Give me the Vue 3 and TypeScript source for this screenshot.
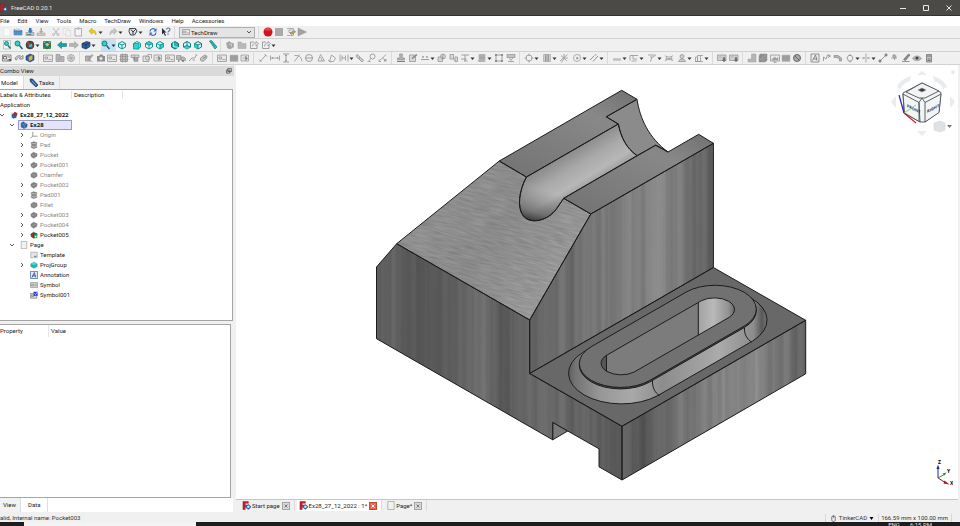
<script setup lang="ts">
import { computed, ref } from 'vue'

// [path data, fill, stroke, stroke width]; an empty entry means "none"
type Part = [string, string?, string?, number?]

interface Tool {
  icon: string
  label: string
  menu?: boolean
  active?: boolean
}

interface Group {
  width: number
  handle: boolean
  tools: Tool[]
  workbench?: boolean
}

const G = '#949494'
const T = '#0b9a9a'
const C = '#35cfcb'
const D = '#2b3440'

const box = 'M3 7l7-4 7 4v7l-7 4-7-4z'
const boxLines = 'M3 7l7 3 7-3M10 10v8'

const icons: Record<string, Part[]> = {
  blank: [['M4 2h9l3 3v13H4z', '#fafafa', '#dcdcdc']],
  open: [['M2 5h6l2 2h8v9H2z', '#3d78b4', '#2f5f92'], ['M3 3h12v4H3z', '#c9d3dc'], ['M2 9h16v7H2z', '#5290cc']],
  save: [['M2 11h16v6H2z', '#c4cad0', '#6d7a88'], ['M8 2h5v5h3l-5 6-6-6h3z', '#3a76b8'], ['M4 15h9', '', '#55606c', 1.5]],
  saveAs: [['M2 12h16v5H2z', '#cccccc', '#999999'], ['M9 2h3v6h3l-5 5-4-5h3z', '#a9a9a9']],
  cut: [['M4 2l9 12M16 2L7 14', '', '#a8a8a8', 1.6], ['M3 15a2 2 0 104 0 2 2 0 10-4 0M12 15a2 2 0 104 0 2 2 0 10-4 0', '', '#a8a8a8', 1.6]],
  copy: [['M3 3h9v11H3z', '#f3f3f3', '#d6d6d6'], ['M8 7h9v11H8z', '#f3f3f3', '#cccccc']],
  paste: [['M4 3h13v15H4z', '#f4f4f4', '#a0a0a0', 1.6], ['M8 1h5v4H8z', '#b4b4b4']],
  undo: [['M2 8l6-6v4c6 0 9 3 8 10-2-4-4-5-8-5v4z', '#f0c619', '#c9a51d']],
  redo: [['M18 8l-6-6v4c-6 0-9 3-8 10 2-4 4-5 8-5v4z', '#c4c4c4', '#adadad']],
  link: [['M3 3h12l3 5-5 8H5L2 9z', '#e3e6ea', D, 1.8], ['M6 5l4 5 6-6M10 10v5', '', D, 2]],
  refresh: [['M4 9a6 6 0 0111-3M16 11a6 6 0 01-11 3', '', '#3a6cac', 2.4], ['M17 2v7h-6zM3 18v-7h6z', '#3a6cac']],
  help: [['M2 2v13l3-3 3 6 2-1-3-6h4z', '#27323f'], ['M11 5c0-4 7-4 7 0 0 3-4 3-4 6M14 13v3', '', '#55749c', 2.2]],
  sheet: [['M1 4h18v12H1z', '#eeeeee', '#777777', 1.5], ['M4 8h6v4H4zM12 12h5', '', '#777777', 1.4]],
  record: [['M1 10a9 9 0 1018 0 9 9 0 10-18 0', '#d3131c'], ['M4 7a6 5 0 0112 0', '#e8484c']],
  stop: [['M2 2h16v16H2z', '#a9a9a9']],
  macro: [['M2 3h13v3H6v5h9v6H2', '#ececec', '#9a9a9a', 1.5], ['M8 12l9-5 2 3-8 5z', '#c8a74a', '#6c6250']],
  play: [['M2 2l17 8-17 8z', '#a3a3a3', '#949494']],

  fitAll: [['M3 1h14v17H3z', '#eef3f3', '#8f9a9a'], ['M5 7a4 4 0 108 0 4 4 0 10-8 0', C, '#14706f', 1.6], ['M12 11l5 6', '', '#176565', 2.5]],
  zoom: [['M2 7a5 5 0 1010 0A5 5 0 102 7', C, '#14706f', 1.8], ['M11 11l6 7', '', '#176565', 3]],
  style: [['M2 10a8 8 0 1016 0 8 8 0 10-16 0', '#4b4b4b', '#222222'], ['M5 5l10 10', '', '#d23b3b', 3], ['M7 12l6-5 2 4-5 4z', C]],
  bbox: [[box, '#13807c', '#0a4f4d'], ['M3 3h14v14H3z', '', '#3a6d38', 1.6], ['M6 8l5-2 4 3-5 4z', '#e2c65d']],
  left: [['M1 10l8-7v4h10v6H9v4z', '#12a7a7', '#0c6e70']],
  right: [['M19 10l-8-7v4H1v6h10v4z', '#b4b4b4', '#999999']],
  cubeBlue: [['M2 7l9-4 7 2v8l-8 5-8-3z', '#2c5f98', '#183a66', 1.4], ['M2 7l8 2 8-4M10 9v9', '', '#173358', 1.4]],
  cubeIso: [[box, '#e6f6f6', T, 2], [boxLines, '', T, 2]],
  cubeFront: [[box, '#e0f5f5', T, 2], ['M3 7h11v11H3z', C, T, 1.6]],
  cubeTop: [[box, '#e9f7f7', T, 2], ['M3 7l7-4 7 4-7 3z', C, T], [boxLines, '', T, 1.8]],
  cubeRight: [[box, '#e9f7f7', T, 2], ['M10 10l7-3v7l-7 4z', C, T], [boxLines, '', T, 1.8]],
  cubeRear: [[box, '#27b3b0', '#0a7373', 2], ['M7 5v8l10 2', '', '#d9fbfa', 1.6]],
  cubeBottom: [[box, '#d9f2f2', '#0a7f7f', 2], ['M3 14l7-3 7 3-7 4z', C], ['M10 3v8M3 14l7-3 7 3', '', '#0a7f7f', 1.8]],
  cubeLeft: [[box, '#d9f2f2', '#0a7f7f', 2], ['M3 7l7 3v8l-7-4z', C], [boxLines, '', '#0a7f7f', 1.8]],
  measure: [['M3 2l4-1 11 13-4 4z', '#2fc0bd', '#0d7a78', 1.4], ['M7 6l2-2M10 10l2-2M13 13l2-2', '', '#0b5b5a']],
  part: [['M3 6l6-3 3 3 5 1v7l-7 4-5-2z', '#a5a5a5', '#969696'], ['M8 8l5 1v4', '', '#dddddd', 1.5]],
  folder: [['M2 4h6l2 3h8v10H2z', '#b9b9b9', '#a2a2a2']],
  export: [['M16 10v7H3V4h7', '', G, 1.8], ['M7 13c0-5 3-7 7-7V3l5 4-5 5V9', '#e6e6e6', G, 1.5]],

  page: [['M1 4h17v12H1z', '#f1f1f1', '#6b6b6b', 1.6], ['M3 7h6v5H3zM11 8h5M10 14h7', '', '#555555', 1.6], ['M13 12h6l-3 5z', '#4a4a4a']],
  redraw: [['M2 12c2-7 10-8 13-5l3-2v7h-7l2-3c-3-2-7 0-8 5z', '#e2e2e2', '#666666', 1.4]],
  view: [['M2 6l8-4 8 3v9l-8 4-8-4z', '#2c5d93', '#1c3558'], ['M7 8l8-4v9l-7 3z', '#d6b248']],
  frame: [['M1 4h18v13H1z', '#e6e6e6', G, 1.6], ['M4 8h5v4H4zM11 13h6', '', G, 1.5]],
  stack: [['M2 3h8v4h8v10H2z', '#b7b7b7', G, 1.4], ['M5 10h9M5 13h9', '', '#8f8f8f']],
  globe: [['M3 10a7 7 0 1014 0 7 7 0 10-14 0M10 3v14M3 10h14M6 5c3 3 3 8 0 11M14 5c-3 3-3 8 0 11', '', G, 1.4]],
  pen: [['M3 6h9v10H3zM7 12L16 3l2 2-9 9z', '#b9b9b9', '#8b8b8b', 1.5], ['M5 8h4M11 15l6 2', '', G, 1.5]],
  camera: [['M2 6h4l2-3h5l2 3h3v11H2z', '#8e8e8e'], ['M6 11a4 4 0 108 0 4 4 0 10-8 0', '#e2e2e2', '#777777']],
  grid: [['M3 3h14v14H3z', '#bdbdbd', G, 1.6], ['M1 7h18M1 13h18M7 1v18M13 1v18', '', G, 1.4]],
  proj: [['M2 4h16v5H2z', '#d6d6d6', G, 1.5], ['M6 9h10v8H8z', '#a4a4a4', G], ['M9 5v9', '', '#777777']],
  detail: [['M2 6h12v11H2z', '#e2e2e2', G, 1.6], ['M7 10a4 4 0 108 0 4 4 0 10-8 0M11 3h8v8', '', G, 1.6]],
  section: [['M2 4h15v12H2z', '#e2e2e2', G, 1.4], ['M6 10h8M11 6v9l4-4z', '#848484', '#848484']],
  truck: [['M1 5h9v8H1zM10 8h6l3 3v4h-9z', '#b8b8b8', G, 1.4], ['M4 16h3M12 16h4', '', '#777777', 3]],
  arc: [['M2 16l6-6h5l4-6M9 14h5M15 2l3 3', '', G, 1.8]],
  clip: [['M3 10l8-6 5 2-1 5-7 6-5-2z', '#c2c2c2', G, 1.6], ['M8 11l6-4', '', '#777777', 1.5]],
  dimDiag: [['M4 17L16 4M2 13l5 5M13 2l5 5', '', G, 1.8]],
  dimH: [['M1 5v10M19 5v10M2 10h16M5 8v4M15 8v4', '', G, 1.6]],
  dimV: [['M4 2h12M4 18h12M10 3v14M8 5h4M8 15h4', '', G, 1.8]],
  dimArc: [['M3 5h6c5 1 8 5 9 12M13 3L3 17', '', G, 1.6]],
  dimDia: [['M3 10a7 7 0 1014 0 7 7 0 10-14 0M3 10h14', '', G, 1.8]],
  dimAngle: [['M4 16L9 3l8 13zM7 9c3 0 5 2 5 7', '', G, 1.6]],
  dim3: [['M5 17L9 4l8 6-4 7zM2 14l5 4', '', G, 1.6]],
  extent: [['M2 3v14M18 3v14M6 5v10M13 5v10M6 10h7', '', G, 1.6]],
  chain: [['M4 3l6 5-3 4-5-6zM10 9l7 5-3 4-6-6z', '#d0d0d0', G, 1.6]],
  balloon: [['M6 7a5 5 0 1010 0A5 5 0 106 7M8 11l-6 6M3 17h4', '', G, 1.7]],
  axo: [['M3 15l6-5 6 5M9 10l7-7M2 13v4h4', '', G, 1.6], ['M12 12h5v5h-5z', '#a4a4a4']],
  stamp: [['M7 2h6l-1 8h5v4H3v-4h5z', '#b4b4b4', G, 1.5], ['M2 17h16', '', '#7e7e7e', 2]],
  note: [['M3 4h12v13H3z', '#dadada', G, 1.6], ['M7 13l2-5 8-6 2 2-8 7z', '#8a8a8a']],
  cosmetic: [['M2 13h16M6 6v3M14 6v3M4 8h4M12 8h4', '', G, 1.8]],
  globePage: [['M2 8h9v9H2zM7 7a5 5 0 1010 0 5 5 0 10-10 0M12 3v9', '#d6d6d6', G, 1.5]],
  align: [['M2 3h7v9H2zM12 8h5v9h-5zM9 14h3', '#dadada', G, 1.6]],
  tee: [['M3 4h15M10 4v12M2 12h11M8 16h7', '', G, 1.8]],
  hatch: [['M4 3h12v14H4z', '#c6c6c6', G], ['M4 6h12M4 9h12M4 12h12M8 3v14M12 3v14M1 16h6', '', '#8c8c8c']],
  square: [['M4 4h12v12H4z', '', G, 1.8], ['M2 2h4v4H2zM14 2h4v4h-4zM2 14h4v4H2zM14 14h4v4h-4z', '#8f8f8f']],
  weld: [['M2 3h16v6H2z', '#c2c2c2', G, 1.4], ['M6 9l4 6 4-6M4 17h12', '', G, 1.6]],
  target: [['M4 10a6 6 0 1012 0 6 6 0 10-12 0M10 1v5M10 14v5M1 10h5M14 10h5', '', G, 1.6]],
  thread: [['M3 3h14v14H3z', '#d1d1d1', G], ['M7 3v14M10 3v14M13 3v14', '', G, 1.8]],
  star: [['M2 16L17 3M4 5l12 11M10 2v9l-5 8M10 10h8', '', G, 1.6]],
  circleDot: [['M3 10a7 7 0 1014 0 7 7 0 10-14 0', '', G, 1.4], ['M9 9h3v3H9zM14 3l3 2', '#8a8a8a', G]],
  parallel: [['M2 14L11 5M8 17L18 6M12 3l3 1', '', G, 2]],
  dots: [['M2 14h16M4 10v3M8 10v3M12 10v3M16 10v3', '', G, 1.6]],
  axes: [['M2 5h16M2 5v10M8 5v7h8M5 16h10', '', G, 1.6]],
  flag: [['M2 4h15l-4 4H6M10 8L7 17', '', G, 1.6]],
  bridge: [['M2 16c3-4 13-4 16 0M2 5c4 4 12 4 16 0M5 7l-1 8M15 7l1 8M5 11h10', '', G, 1.5]],
  user: [['M6 7a4 4 0 108 0 4 4 0 10-8 0M3 17c1-6 13-6 14 0z', '#d0d0d0', G, 1.6]],
  chart: [['M3 17V8h4v9zM7 17V5h6v12zM12 5h6M2 17h16', '', G, 1.5]],
  pageDown: [['M1 4h17v11H1z', '#cfcfcf', G, 1.5], ['M4 8h5M12 9v5h-2l4 4 4-4h-2V9z', '#707070', '#707070', 0.6]],
  steps: [['M9 2h9v16H2v-6h7z', '#b4b4b4', '#a4a4a4']],
  hatchFace: [['M4 2h14v13l-4 3H2V6z', '#8d8d8d', G], ['M4 14L15 4M8 16L17 8', '', '#c4c4c4']],
  image: [['M1 4h18v12H1z', '#ececec', G, 1.6], ['M4 13l5-5 4 3 3-2v5H4zM8 16v3h5', '#a2a2a2', G]],
  toggle: [['M2 4h16v13H2z', '#a3a3a3', '#b5b5b5'], ['M2 8h16M2 12h16', '', '#8d8d8d']],
  forbid: [['M3 10a7 7 0 1014 0 7 7 0 10-14 0', '#aaaaaa', '#666666', 2], ['M6 6l8 8', '', '#666666', 2]],
  letter: [['M2 2h16v16H2z', '#ececec', '#7d7d7d', 1.6], ['M5 15l6-11 3 11M7 12h7', '', '#727272', 1.7]],
  leader: [['M3 16V8l5 4 3-8 5 3M13 3l4 3-5 3', '', G, 1.8]],
  richText: [['M2 5h8l7 5v6h-4v-5L7 9H2z', '#b4b4b4', '#8b8b8b', 1.4]],
  centerMark: [['M4 10l3-5h6l3 5-3 6H7zM10 2v3M10 16v3', '', G, 1.8]],
  centerLine: [['M10 1v18M2 10h5M13 10h5M6 8v4M14 8v4', '', G, 1.5]],
  line2: [['M4 16L16 4M2 14h4v4H2zM14 2h4v4h-4z', '#858585', '#858585', 1.6]],
  vertexIcon: [['M7 7c0-5 7-5 7 0 0 3-3 3-3 7', '#aaaaaa', G, 1.5], ['M4 10h12', '', G, 1.5]],
  brush: [['M5 13L15 2l3 2-9 11zM2 17h15', '#8a8a8a', '#777777', 1.5]],
  eye: [['M1 11c4-7 14-7 18 0-4 6-14 6-18 0z', '#b2b2b2', '#8a8a8a'], ['M7 10a3 3 0 106 0 3 3 0 10-6 0', '#444444']],
  trash: [['M5 3h10v15H5z', '#c4c4c4', '#777777', 1.6], ['M5 6h10M7 12h6M7 15h6', '', '#666666', 1.6]],

  doc: [['M3 4h14v14H3z', '#f0f0f0', '#c9c9c9'], ['M5 9l8-5 4 4-2 8-7 2-3-3z', '#30639c', '#193a66'], ['M12 3a4 4 0 106 3z', '#c22430', '#8b1720']],
  body: [['M3 5l6-3 3 3 6 3-1 7-7 4-7-4z', '#2d659f', '#1a3d68'], ['M5 7l5 2 1 8M11 6l4 3', '', '#7bb0de', 1.5]],
  origin: [['M7 2v11H19M7 13l-6 5', '', '#7b7b7b', 1.8]],
  pad: [['M3 4l6-2 8 2v4l-3 2 3 2v4l-8 3-6-3v-4l3-2-3-2z', '#8a8a8a', '#555555'], ['M3 5l7 2 7-2M3 13l7 2 7-2', '', '#d5d5d5', 1.6]],
  pocket: [['M2 8l7-5 4 2 5 2-1 6-8 5-6-4z', '#808080', '#6a6a6a'], ['M4 10l5 2 4-4 3 1', '', '#b5b5b5', 1.5]],
  solid: [['M2 8l6-5 9 2 1 8-8 5-7-3z', '#858585', '#767676'], ['M5 8l6 2M8 13l7-3', '', '#9e9e9e', 1.5]],
  tip: [['M2 8l7-5 4 2 5 2-1 6-8 5-6-4z', '#264a80', '#142b50'], ['M2 8l5-4 1 12-5-2z', '#b3262c'], ['M10 8h8v10h-8z', '#26a03a'], ['M12 12h4v4h-4z', '#e8fbe8']],
  sheetPage: [['M3 1h14v18H3z', '#f0f2f2', '#8d9292', 1.4]],
  template: [['M2 3h16v14H2z', '#e3e7e7', '#8c9494', 1.4], ['M10 12h6v3h-6', '#7f8787']],
  group: [['M2 7l8-4 8 4v7l-8 4-8-4z', '#1db6b9', '#159295'], ['M2 7l8-4 8 4-8 3z', '#4fd7d8']],
  annotation: [['M1 1h18v18H1z', '#dfeaf6', '#3d6ea7', 2], ['M5 16l6-12 3 12M6 12h8', '', '#27568e', 2.2]],
  symbol: [['M1 4h18v12H1z', '#e4e4e4', '#767676', 1.5], ['M4 8h5v4H4zM11 8h6M11 12h6', '', '#777777', 1.6]],
  symbolMark: [['M1 6h16v12H1z', '#dcdcdc', '#666666', 1.5], ['M4 10h5v4H4z', '', '#777777', 1.6], ['M9 2h10v10H9z', '#1c2fd8'], ['M11 6l3 3 4-6', '', '#ffffff', 1.8]],
  logo: [['M1 1h12v4H6v4h5v4H6v6H1z', '#c8202a', '#8e1119'], ['M9 13a4 4 0 108 0 4 4 0 10-8 0M13 7v3M13 16v3M7 13h3M16 13h3', '#dfe8f5', '#2e5ca0', 2.4]],
  tasks: [['M2 2l5 0 11 12-4 4L3 8z', '#2f649c', '#16324f', 1.4], ['M6 6l8 8', '', '#7fb2df', 1.6]],
  float: [['M6 2h12v10H6zM2 7h11v10H2z', '#e0e0e0', '#333333', 2.2]],
  mouse: [['M5 6c0-5 10-5 10 0v8c0 6-10 6-10 0zM10 2v6', '', '#444444', 1.8]],
}

const t = (icon: string, label: string, menu = false, active = false): Tool => ({ icon, label, menu, active })

const rows: Group[][] = [
  [
    { width: 49, handle: false, tools: [t('blank', 'New'), t('open', 'Open'), t('save', 'Save'), t('saveAs', 'Save as')] },
    { width: 37, handle: false, tools: [t('cut', 'Cut'), t('copy', 'Copy'), t('paste', 'Paste')] },
    { width: 40, handle: false, tools: [t('undo', 'Undo', true), t('redo', 'Redo', true)] },
    { width: 20, handle: false, tools: [t('link', 'Make link', true)] },
    { width: 28, handle: false, tools: [t('refresh', 'Refresh'), t('help', 'What is this?')] },
    { width: 84, handle: true, tools: [], workbench: true },
    { width: 52, handle: true, tools: [t('record', 'Record macro'), t('stop', 'Stop macro'), t('macro', 'Macros'), t('play', 'Run macro')] },
  ],
  [
    { width: 55, handle: false, tools: [t('fitAll', 'Fit all'), t('zoom', 'Fit selection'), t('style', 'Draw style', true), t('bbox', 'Bounding box')] },
    { width: 44, handle: false, tools: [t('left', 'Back'), t('right', 'Forward'), t('cubeBlue', 'Linked object', true)] },
    { width: 31, handle: false, tools: [t('zoom', 'Sync view', true, true), t('cubeIso', 'Isometric')] },
    { width: 38, handle: false, tools: [t('cubeFront', 'Front'), t('cubeTop', 'Top'), t('cubeRight', 'Right')] },
    { width: 38, handle: false, tools: [t('cubeRear', 'Rear'), t('cubeBottom', 'Bottom'), t('cubeLeft', 'Left')] },
    { width: 14, handle: false, tools: [t('measure', 'Measure')] },
    { width: 59, handle: true, tools: [t('part', 'Create part'), t('folder', 'Create group'), t('export', 'Make link'), t('export', 'Link actions', true)] },
  ],
  [
    { width: 38, handle: false, tools: [t('page', 'Insert page'), t('redraw', 'Redraw page'), t('view', 'Insert view')] },
    { width: 41, handle: true, tools: [t('frame', 'Print all'), t('stack', 'Page stack'), t('globe', 'Web page')] },
    { width: 133, handle: true, tools: [t('pen', 'Active view'), t('camera', 'Capture'), t('frame', 'Projection group'), t('grid', 'Section'), t('proj', 'Complex section'), t('detail', 'Detail'), t('section', 'Draft view'), t('frame', 'Arch view'), t('truck', 'Spreadsheet view'), t('arc', 'Move view'), t('clip', 'Share view')] },
    { width: 41, handle: true, tools: [t('frame', 'Clip group'), t('toggle', 'Add to clip'), t('section', 'Remove from clip')] },
    { width: 138, handle: true, tools: [t('dimDiag', 'Length'), t('dimH', 'Horizontal'), t('dimV', 'Vertical'), t('dimArc', 'Radius'), t('dimDia', 'Diameter'), t('dimAngle', 'Angle'), t('dim3', 'Three-point angle'), t('extent', 'Extent', true), t('chain', 'Link dimension'), t('balloon', 'Balloon'), t('axo', 'Axonometric')] },
    { width: 128, handle: true, tools: [t('stamp', 'Landmark'), t('note', 'Customize format'), t('cosmetic', 'Increase decimals', true), t('globePage', 'Chamfer'), t('align', 'Position'), t('tee', 'Cascade', true), t('hatch', 'Area', true), t('square', 'Select line'), t('weld', 'Lock view')] },
    { width: 88, handle: true, tools: [t('target', 'Centre lines', true), t('thread', 'Thread', true), t('star', 'Intersection'), t('circleDot', 'Cosmetic circle', true), t('parallel', 'Parallel line', true)] },
    { width: 105, handle: true, tools: [t('dots', 'Chain dimension', true), t('axes', 'Coordinate', true), t('flag', 'Surface', true), t('bridge', 'Arc length'), t('user', 'Prefix', true), t('chart', 'Bar', true)] },
    { width: 30, handle: true, tools: [t('pageDown', 'Export SVG'), t('pageDown', 'Export DXF')] },
    { width: 63, handle: true, tools: [t('steps', 'Hatch'), t('hatchFace', 'Geometric hatch'), t('image', 'Image'), t('toggle', 'Toggle frame'), t('forbid', 'Hide frames')] },
    { width: 132, handle: true, tools: [t('letter', 'Annotation'), t('leader', 'Leader'), t('richText', 'Rich text'), t('centerMark', 'Cosmetic vertex', true), t('centerLine', 'Centre line', true), t('line2', 'Two-point line'), t('vertexIcon', 'Erase'), t('brush', 'Line appearance'), t('eye', 'Show all'), t('trash', 'Weld')] },
  ],
]

const menus = ['File', 'Edit', 'View', 'Tools', 'Macro', 'TechDraw', 'Windows', 'Help', 'Accessories']

interface Node {
  label: string
  icon: string
  depth: number
  arrow?: 'open' | 'closed'
  hidden?: boolean
  bold?: boolean
  selected?: boolean
}

const nodes = ref<Node[]>([
  { label: 'Ex28_27_12_2022', icon: 'doc', depth: 0, arrow: 'open', bold: true },
  { label: 'Ex28', icon: 'body', depth: 1, arrow: 'open', bold: true, selected: true },
  { label: 'Origin', icon: 'origin', depth: 2, arrow: 'closed', hidden: true },
  { label: 'Pad', icon: 'pad', depth: 2, arrow: 'closed', hidden: true },
  { label: 'Pocket', icon: 'pocket', depth: 2, arrow: 'closed', hidden: true },
  { label: 'Pocket001', icon: 'pocket', depth: 2, arrow: 'closed', hidden: true },
  { label: 'Chamfer', icon: 'solid', depth: 2, hidden: true },
  { label: 'Pocket002', icon: 'pocket', depth: 2, arrow: 'closed', hidden: true },
  { label: 'Pad001', icon: 'pad', depth: 2, arrow: 'closed', hidden: true },
  { label: 'Fillet', icon: 'solid', depth: 2, hidden: true },
  { label: 'Pocket003', icon: 'pocket', depth: 2, arrow: 'closed', hidden: true },
  { label: 'Pocket004', icon: 'pocket', depth: 2, arrow: 'closed', hidden: true },
  { label: 'Pocket005', icon: 'tip', depth: 2, arrow: 'closed' },
  { label: 'Page', icon: 'sheetPage', depth: 1, arrow: 'open' },
  { label: 'Template', icon: 'template', depth: 2 },
  { label: 'ProjGroup', icon: 'group', depth: 2, arrow: 'closed' },
  { label: 'Annotation', icon: 'annotation', depth: 2 },
  { label: 'Symbol', icon: 'symbol', depth: 2 },
  { label: 'Symbol001', icon: 'symbolMark', depth: 2 },
])

const workbench = ref('TechDraw')
const documentTabs = [
  { label: 'Start page', icon: 'logo', current: false },
  { label: 'Ex28_27_12_2022 : 1*', icon: 'logo', current: true },
  { label: 'Page*', icon: 'sheetPage', current: false },
]

const size = { w: 166.59, h: 100 }
const dimensions = computed(() => `${size.w.toFixed(2)} mm x ${size.h.toFixed(2)} mm`)

// Outlines of the part, in the coordinates of the 3D view
const slot = {
  hole: 'M606.2 355.5L701.2 300.8A20 11.6 0 0 1 729.4 317.2L634.4 371.9A20 11.6 0 0 1 606.2 355.5Z',
  rim: 'M591.1 346.8L686.1 292.1A41.3 23.9 0 0 1 744.5 325.9L649.5 380.6A41.3 23.9 0 0 1 591.1 346.8Z',
  base: 'M582.8 352.4L677.8 297.7A53 30.6 0 0 1 752.8 340.9L657.8 395.6A53 30.6 0 0 1 582.8 352.4Z',
}
const faces = {
  side: 'M376.5 267L396.7 243.7L529.7 320V373.5L622 426.3V480L599 466.8V448.8L567.7 431L552.7 422.3V439.8L376.5 338.7Z',
  slope: 'M396.7 243.7L499.3 161L526.4 177C519 191 517 207 523 215.5C530 225 548 221 556.7 208.5L563.7 198.3L590.8 214L529.7 320Z',
  topBack: 'M499.3 161L621.7 90.3L637 99.3L606.3 116.8L618.3 124L526.4 177Z',
  topFront: 'M563.7 198.3L655.7 145.2L668 152L698.7 134.3L713.4 143.3L590.8 214Z',
  bore: 'M526.4 177L618.3 124C621 137 626 148 637 155.6L563.7 198.3L556.7 208.5C548 221 530 225 523 215.5C517 207 519 191 526.4 177Z',
  counter: 'M606.3 116.8L637 99.3C640 119 649 138 668 152L655.7 145.2L637 155.6C626 148 621 137 618.3 124Z',
  wall: 'M590.8 214L713.4 143.3V267.5L529.7 373.5V320Z',
  deck: 'M529.7 373.5L713.4 267.5L805.7 320.3L622 426.3Z',
  front: 'M622 426.3L805.7 320.3V373.8L622 480Z',
}
</script>

<template>
  <div class="app">
    <header class="title-bar">
      <svg class="icon" viewBox="0 0 20 20"><path v-for="(p, i) in icons.logo" :key="i" :d="p[0]" :fill="p[1] || 'none'" :stroke="p[2] || 'none'" :stroke-width="p[3] || 1" /></svg>
      <span class="title">FreeCAD 0.20.1</span>
      <div class="window-buttons">
        <button type="button" aria-label="Minimize"><svg viewBox="0 0 8 8"><path d="M1 4.5h6" /></svg></button>
        <button type="button" aria-label="Maximize"><svg viewBox="0 0 8 8"><path d="M1.5 1.5h5v5h-5z" /></svg></button>
        <button type="button" aria-label="Close"><svg viewBox="0 0 8 8"><path d="M1.5 1.5l5 5M6.500 1.5l-5 5" /></svg></button>
      </div>
    </header>

    <nav class="menu-bar">
      <button v-for="m in menus" :key="m" type="button">{{ m }}</button>
    </nav>

    <div v-for="(row, r) in rows" :key="r" class="tool-row">
      <div v-for="(group, g) in row" :key="g" class="tool-group" :class="{ handle: group.handle }" :style="{ width: group.width + 'px' }">
        <label v-if="group.workbench" class="workbench">
          <svg class="icon" viewBox="0 0 20 20"><path v-for="(p, i) in icons.sheet" :key="i" :d="p[0]" :fill="p[1] || 'none'" :stroke="p[2] || 'none'" :stroke-width="p[3] || 1" /></svg>
          <select v-model="workbench" aria-label="Workbench"><option>TechDraw</option></select>
          <svg class="chevron" viewBox="0 0 6 6"><path d="M1 2l2 2 2-2" /></svg>
        </label>
        <button v-for="(tool, k) in group.tools" :key="k" type="button" class="tool" :class="{ active: tool.active }" :aria-label="tool.label">
          <svg class="icon" viewBox="0 0 20 20"><path v-for="(p, i) in icons[tool.icon]" :key="i" :d="p[0]" :fill="p[1] || 'none'" :stroke="p[2] || 'none'" :stroke-width="p[3] || 1" /></svg>
          <svg v-if="tool.menu" class="drop" viewBox="0 0 5 5"><path d="M0.500 1.500h4l-2 2.500z" /></svg>
        </button>
      </div>
    </div>

    <main class="work">
      <aside class="combo">
        <div class="dock-title">
          <span>Combo View</span>
          <button type="button" aria-label="Float panel"><svg viewBox="0 0 20 20"><path v-for="(p, i) in icons.float" :key="i" :d="p[0]" :fill="p[1]" :stroke="p[2]" :stroke-width="p[3]" /></svg></button>
        </div>
        <div class="panel-tabs">
          <button type="button" class="current">Model</button>
          <button type="button">
            <svg class="icon" viewBox="0 0 20 20"><path v-for="(p, i) in icons.tasks" :key="i" :d="p[0]" :fill="p[1] || 'none'" :stroke="p[2]" :stroke-width="p[3]" /></svg>
            Tasks
          </button>
        </div>
        <section class="tree">
          <div class="tree-head"><span>Labels &amp; Attributes</span><span>Description</span></div>
          <div class="tree-root">Application</div>
          <ul>
            <li v-for="n in nodes" :key="n.label" :class="['depth-' + n.depth, { hidden: n.hidden, bold: n.bold, selected: n.selected }]">
              <span class="twist">
                <svg v-if="n.arrow" viewBox="0 0 6 6"><path :d="n.arrow === 'open' ? 'M1 2l2 2 2-2' : 'M2 1l2 2-2 2'" /></svg>
              </span>
              <span class="entry">
                <svg class="small-icon" viewBox="0 0 20 20"><path v-for="(p, i) in icons[n.icon]" :key="i" :d="p[0]" :fill="p[1] || 'none'" :stroke="p[2] || 'none'" :stroke-width="p[3] || 1" /></svg>
                <span>{{ n.label }}</span>
              </span>
            </li>
          </ul>
        </section>
        <section class="properties">
          <table>
            <thead><tr><th>Property</th><th>Value</th></tr></thead>
          </table>
        </section>
        <div class="bottom-tabs">
          <button type="button">View</button>
          <button type="button" class="current">Data</button>
        </div>
      </aside>

      <section class="documents">
        <div class="viewport">
          <svg class="model" viewBox="236 65 722 434" role="img" aria-label="Part">
            <defs>
              <filter id="vertical-streaks" x="0" y="0" width="1" height="1">
                <feTurbulence type="fractalNoise" baseFrequency="0.12 0.0005" numOctaves="3" seed="4" />
                <feColorMatrix values="0 0 0 0 0  0 0 0 0 0  0 0 0 0 0  2 0 0 0 -0.6" />
              </filter>
              <filter id="brushed" x="0" y="0" width="1" height="1">
                <feTurbulence type="fractalNoise" baseFrequency="0.06 0.7" numOctaves="2" seed="9" />
                <feColorMatrix values="0 0 0 0 0  0 0 0 0 0  0 0 0 0 0  2 0 0 0 -0.6" />
              </filter>
              <linearGradient id="side-shade" gradientUnits="userSpaceOnUse" x1="376" y1="0" x2="622" y2="0">
                <stop offset="0" stop-color="#6c6c6c" /><stop offset="0.2" stop-color="#5d5d5d" /><stop offset="0.35" stop-color="#686868" />
                <stop offset="0.44" stop-color="#777777" /><stop offset="0.5" stop-color="#606060" /><stop offset="0.63" stop-color="#707070" />
                <stop offset="0.8" stop-color="#6e6e6e" /><stop offset="1" stop-color="#646464" />
              </linearGradient>
              <linearGradient id="wall-shade" gradientUnits="userSpaceOnUse" x1="530" y1="0" x2="714" y2="0">
                <stop offset="0" stop-color="#6a6a6a" /><stop offset="0.3" stop-color="#7d7d7d" /><stop offset="0.7" stop-color="#939393" />
                <stop offset="0.84" stop-color="#828282" /><stop offset="1" stop-color="#616161" />
              </linearGradient>
              <linearGradient id="front-shade" gradientUnits="userSpaceOnUse" x1="622" y1="0" x2="806" y2="0">
                <stop offset="0" stop-color="#6e6e6e" /><stop offset="0.12" stop-color="#606060" /><stop offset="0.3" stop-color="#7e7e7e" />
                <stop offset="0.72" stop-color="#949494" /><stop offset="0.85" stop-color="#808080" /><stop offset="1" stop-color="#6a6a6a" />
              </linearGradient>
              <linearGradient id="slope-shade" gradientUnits="userSpaceOnUse" x1="400" y1="180" x2="560" y2="300">
                <stop offset="0" stop-color="#9a9a9a" /><stop offset="0.55" stop-color="#929292" /><stop offset="1" stop-color="#a3a3a3" />
              </linearGradient>
              <linearGradient id="bore-shade" gradientUnits="userSpaceOnUse" x1="558" y1="158" x2="583" y2="199">
                <stop offset="0" stop-color="#8a8a8a" /><stop offset="0.35" stop-color="#a9a9a9" /><stop offset="0.65" stop-color="#b7b7b7" /><stop offset="1" stop-color="#868686" />
              </linearGradient>
              <linearGradient id="bore-end" gradientUnits="userSpaceOnUse" x1="546" y1="226" x2="556" y2="194">
                <stop offset="0" stop-color="#333333" /><stop offset="0.3" stop-color="#5c5c5c" stop-opacity="0.7" /><stop offset="1" stop-color="#777777" stop-opacity="0" />
              </linearGradient>
              <linearGradient id="top-shade" x1="0" y1="1" x2="1" y2="0">
                <stop offset="0" stop-color="#727272" /><stop offset="0.7" stop-color="#888888" /><stop offset="1" stop-color="#707070" />
              </linearGradient>
              <linearGradient id="fillet-shade" gradientUnits="userSpaceOnUse" x1="567" y1="0" x2="770" y2="0">
                <stop offset="0" stop-color="#5a5a5a" /><stop offset="0.04" stop-color="#737373" /><stop offset="0.16" stop-color="#969696" />
                <stop offset="0.32" stop-color="#a9a9a9" /><stop offset="0.47" stop-color="#8c8c8c" /><stop offset="0.75" stop-color="#ababab" />
                <stop offset="0.92" stop-color="#8c8c8c" /><stop offset="0.96" stop-color="#585858" /><stop offset="1" stop-color="#868686" />
              </linearGradient>
              <linearGradient id="pocket-end" gradientUnits="userSpaceOnUse" x1="698" y1="0" x2="736" y2="0">
                <stop offset="0" stop-color="#a2a2a2" /><stop offset="0.4" stop-color="#b9b9b9" /><stop offset="0.8" stop-color="#929292" /><stop offset="1" stop-color="#5b5b5b" />
              </linearGradient>
              <clipPath id="clip-vertical"><path :d="faces.side" /><path :d="faces.wall" /><path :d="faces.front" /></clipPath>
              <clipPath id="clip-flat"><path :d="faces.slope" /></clipPath>
              <clipPath id="clip-hole"><path :d="slot.hole" /></clipPath>
            </defs>

            <path d="M552.700 422.300L567.700 431L552.700 439.800Z" fill="#7a7a7a" class="edge" />
            <path :d="faces.side" fill="url(#side-shade)" />
            <path :d="faces.wall" fill="url(#wall-shade)" />
            <path :d="faces.front" fill="url(#front-shade)" />
            <g clip-path="url(#clip-vertical)">
              <rect x="370" y="130" width="440" height="360" filter="url(#vertical-streaks)" opacity="0.18" />
            </g>
            <path :d="faces.slope" fill="url(#slope-shade)" />
            <g clip-path="url(#clip-flat)">
              <rect x="380" y="60" width="300" height="300" filter="url(#brushed)" opacity="0.13" transform="rotate(14 500 240)" />
            </g>
            <path :d="faces.topBack" fill="url(#top-shade)" />
            <path :d="faces.topFront" fill="url(#top-shade)" />
            <path :d="faces.bore" fill="url(#bore-shade)" />
            <path :d="faces.bore" fill="url(#bore-end)" />
            <path :d="faces.counter" fill="#8b8b8b" />
            <path :d="faces.deck" fill="#686868" />

            <g class="edge">
              <path :d="faces.side" /><path :d="faces.slope" /><path :d="faces.topBack" /><path :d="faces.topFront" />
              <path :d="faces.bore" /><path :d="faces.counter" /><path :d="faces.wall" /><path :d="faces.deck" /><path :d="faces.front" />
            </g>

            <path :d="slot.base" fill="url(#fillet-shade)" class="edge" />
            <path :d="slot.rim" fill="#484848" class="edge" transform="translate(0 1.500)" />
            <path :d="slot.rim" fill="#717171" class="edge" />
            <g clip-path="url(#clip-hole)">
              <path d="M600 290H740V385H600Z" fill="#7c7c7c" />
              <path d="M600 290H606.500V385H600Z" fill="#565656" class="edge" />
              <path d="M698.300 290H740V385H698.300Z" fill="url(#pocket-end)" class="edge" />
            </g>
            <path :d="slot.hole" class="edge" fill="none" />
            <path d="M652.500 380.500C652 387 655 393 659.500 395.500M744.500 328C744 334 747 339 751.500 342" class="edge" fill="none" />
          </svg>

          <svg class="nav-cube" viewBox="0 0 76 76" role="img" aria-label="Navigation cube">
            <g transform="translate(3 -2)">
              <path d="M32 12l5-4 5 4zM37 73l-5-5h10zM6 39l5-6v12zM70 39l-5-6v12zM12 24c2-6 8-9 14-11l-1 5c-4 1-7 4-9 7l2 2zM62 24c-2-6-8-9-14-11l1 5c4 1 7 4 9 7l-2 2zM66 9a2 2 0 104 0 2 2 0 10-4 0" fill="#e9ebee" />
              <g fill="#f2f4f6" stroke="#4c4f52" stroke-width="0.900" stroke-linejoin="round">
                <path d="M37 20L56 29.500L54 49L40 59H35L19 50L18 30Z" />
                <path d="M37 20L54 28L40 35H34L21 29Z" />
                <path d="M18 31L34 39.500L35 59L19.500 50Z" />
                <path d="M56 31L40 39.500V59L54 49.500Z" />
                <path d="M37 35L34 39.500V58M37 35L40 39.500" fill="none" />
              </g>
              <path d="M33 27l4-2 4 2-4 2z" fill="#3a3c3e" stroke="#8b8d90" stroke-width="0.500" />
              <g class="cube-label"><text transform="matrix(1 0.500 0 1 22 44)">FRONT</text><text transform="matrix(1 -0.500 0 1 42 50)">RIGHT</text></g>
              <path d="M14 32l5 18" stroke="#2420c8" stroke-width="1.200" />
              <path d="M19 50l12 10" stroke="#c02430" stroke-width="1.200" />
              <path d="M19 50l12-8" stroke="#63cf63" stroke-width="0.800" />
              <path d="M49 60l6-2 5 2v7l-5 2-6-2z" fill="#dfe1e2" stroke="#cfd1d2" stroke-width="0.500" />
              <path d="M62 62h5l-2.500 3z" fill="#777777" />
            </g>
          </svg>

          <svg class="axis-cross" viewBox="0 0 20 28" role="img" aria-label="Axes">
            <path d="M5 18V7" stroke="#24249c" /><path d="M3.500 9L5 4.500L6.500 9z" fill="#24249c" />
            <path d="M5 18l7-4" stroke="#2a8a2a" /><path d="M9.500 13.500l4-1-2 3z" fill="#2a8a2a" />
            <path d="M5 18l8 5" stroke="#8f1f1f" /><path d="M11.500 20.500l5 4-6-1z" fill="#8f1f1f" />
            <text x="5" y="4">Z</text><text x="14" y="13">Y</text><text x="17" y="25">X</text>
          </svg>
        </div>

        <div class="document-tabs">
          <div v-for="tab in documentTabs" :key="tab.label" class="document-tab" :class="{ current: tab.current }">
            <button type="button" class="tab-name">
              <svg class="icon" viewBox="0 0 20 20"><path v-for="(p, i) in icons[tab.icon]" :key="i" :d="p[0]" :fill="p[1] || 'none'" :stroke="p[2] || 'none'" :stroke-width="p[3] || 1" /></svg>
              {{ tab.label }}
            </button>
            <button type="button" class="tab-close" :aria-label="'Close ' + tab.label"><svg viewBox="0 0 8 8"><path d="M2.500 2.500l3 3M5.500 2.500l-3 3" /></svg></button>
          </div>
        </div>
      </section>
    </main>

    <footer class="status">
      <span class="message">alid, Internal name: Pocket003</span>
      <button type="button" class="navigation">
        <svg viewBox="0 0 20 20"><path :d="icons.mouse[0][0]" fill="none" stroke="#444444" stroke-width="2" /></svg>
        TinkerCAD
        <svg viewBox="0 0 5 5"><path d="M0.500 1h4l-2 3z" /></svg>
      </button>
      <span class="dimensions">{{ dimensions }}</span>
    </footer>

    <div class="taskbar"><span class="search"></span><span class="clock"><span>ENG</span><span>6:15 PM</span></span></div>
  </div>
</template>

<style>
body {
  margin: 0;
  background: #f0f0f0;
}
</style>

<style scoped>
.app {
  display: flex;
  flex-direction: column;
  height: 100vh;
  overflow: hidden;
  background: #f0f0f0;
  color: #1c1c1c;
  font: 6px/8px Roboto, 'Noto Sans', sans-serif;
}
button,
select {
  margin: 0;
  padding: 0;
  border: 0;
  background: none;
  color: inherit;
  font: inherit;
}
svg {
  display: block;
}
.icon {
  width: 10px;
  height: 10px;
  flex: none;
}

.title-bar {
  display: flex;
  align-items: center;
  height: 15px;
  flex: none;
  background: #4c4a47;
  border-bottom: 1px solid #33322f;
  color: #e8e8e8;
  box-sizing: content-box;
}
.title-bar .icon {
  width: 8px;
}
.title {
  flex: 1;
  margin-left: 3px;
}
.window-buttons {
  display: flex;
  gap: 1px;
}
.window-buttons button {
  display: grid;
  place-items: center;
  width: 22px;
  height: 15px;
}
.window-buttons svg {
  width: 8px;
  height: 8px;
  fill: none;
  stroke: #e8e8e8;
}

.menu-bar {
  display: flex;
  gap: 8px;
  height: 10px;
  flex: none;
  align-items: center;
  background: #ffffff;
}

.tool-row {
  display: flex;
  height: 12px;
  flex: none;
  border-bottom: 1px solid #d2d2d2;
}
.tool-group {
  display: flex;
  justify-content: space-between;
  align-items: center;
  flex: none;
  box-sizing: border-box;
  padding: 0 3px 0 2px;
}
.tool-group.handle {
  padding-left: 4px;
  border-left: 1px solid #dadada;
  background: radial-gradient(circle, #a8a8a8 40%, transparent 50%) 1px 2px / 2px 2px repeat-y;
}
.tool {
  display: flex;
  align-items: center;
}
.tool.active {
  height: 12px;
  background: #c5e1f6;
}
.drop {
  width: 5px;
  height: 5px;
  fill: #333333;
}
.workbench {
  display: flex;
  align-items: center;
  flex: 1;
  height: 9px;
  padding: 0 2px;
  border: 1px solid #b0b0b0;
  background: #e4e4e4;
}
.workbench .icon {
  width: 8px;
  height: 8px;
}
.workbench select {
  flex: 1;
  min-width: 0;
  height: 9px;
  margin-left: 1px;
  appearance: none;
  line-height: 9px;
}
.chevron {
  width: 6px;
  height: 6px;
  fill: none;
  stroke: #555555;
}

.work {
  display: flex;
  flex: 1;
  min-height: 0;
}
.combo {
  display: flex;
  flex-direction: column;
  width: 236px;
  flex: none;
  padding-top: 1px;
  box-sizing: border-box;
}
.dock-title {
  display: flex;
  justify-content: space-between;
  align-items: center;
  height: 10px;
  margin-right: 2px;
  padding-right: 2px;
  background: #dadada;
}
.dock-title svg {
  width: 6px;
  height: 6px;
}
.panel-tabs {
  display: flex;
  height: 13px;
  align-items: stretch;
}
.panel-tabs button {
  display: flex;
  align-items: center;
  gap: 0;
  padding: 0 5px;
  border-right: 1px solid #dddddd;
}
.panel-tabs .current {
  padding: 0 5px 0 1px;
  background: #ffffff;
}
.tree,
.properties {
  min-height: 0;
  border: 1px solid #a5a5a5;
  border-left: 0;
  background: #ffffff;
  overflow: hidden;
}
.tree {
  flex: 4;
  margin: 0 3px 3px 0;
}
.properties {
  flex: 3;
  margin-right: 5px;
}
.tree-head {
  display: flex;
  height: 10px;
  align-items: center;
}
.tree-head span {
  padding-right: 18px;
  border-right: 1px solid #e4e4e4;
}
.tree-head span:first-child {
  width: 71px;
  padding: 0;
  margin-right: 2px;
}
.tree-root {
  height: 10px;
  line-height: 10px;
}
ul {
  margin: 0;
  padding: 0;
  list-style: none;
}
li {
  display: flex;
  align-items: center;
  height: 10px;
}
.depth-1 {
  padding-left: 10px;
}
.depth-2 {
  padding-left: 20px;
}
.twist {
  width: 8px;
}
.twist svg {
  width: 6px;
  height: 6px;
  margin-left: -1px;
  fill: none;
  stroke: #5c5c5c;
}
.entry {
  display: flex;
  align-items: center;
  gap: 2px;
  height: 8px;
  padding: 0 1px;
  border: 1px solid transparent;
}
.small-icon {
  width: 8px;
  height: 8px;
}
.bold {
  font-family: 'Open Sans', sans-serif;
  font-weight: 700;
}
.hidden {
  color: #888888;
}
.selected .entry {
  width: 50px;
  border-color: #9a9ac6;
  background: #e4e4fb;
}
table {
  border-collapse: collapse;
}
th {
  width: 48px;
  height: 12px;
  padding: 0;
  border-right: 1px solid #e4e4e4;
  font-weight: 400;
  text-align: left;
}
th:last-child {
  padding-left: 2px;
  border: 0;
}
.bottom-tabs {
  display: flex;
  height: 14px;
  margin-right: 3px;
  background: #ffffff;
}
.bottom-tabs button {
  padding: 0 7px;
  border-right: 1px solid #dddddd;
}
.bottom-tabs button:first-child {
  padding: 0 4px 0 3px;
  background: #f2f2f2;
}

.documents {
  display: flex;
  flex-direction: column;
  flex: 1;
  min-width: 0;
  padding-right: 2px;
}
.viewport {
  position: relative;
  flex: 1;
  min-height: 0;
  background: #ffffff;
}
.model {
  width: 100%;
  height: 100%;
}
.edge {
  stroke: #1c1c1c;
  stroke-width: 1;
  stroke-linejoin: round;
}
g.edge {
  fill: none;
}
.nav-cube {
  position: absolute;
  top: 0;
  right: 0;
  width: 76px;
  height: 76px;
  fill: none;
}
.cube-label {
  fill: #303234;
  font: 700 4px/4px 'Open Sans', sans-serif;
}
.axis-cross {
  position: absolute;
  right: 5px;
  bottom: 11px;
  width: 20px;
  height: 28px;
}
.axis-cross text {
  font: 700 5px/5px 'Open Sans', sans-serif;
}

.document-tabs {
  display: flex;
  height: 12px;
  border-top: 1px solid #c6c6c6;
  gap: 2px;
  padding-left: 4px;
}
.document-tab {
  display: flex;
  align-items: center;
  gap: 2px;
  height: 11px;
  padding: 0 4px 0 2px;
  border-right: 1px solid #dddddd;
}
.document-tab.current {
  background: #ffffff;
}
.tab-name {
  display: flex;
  align-items: center;
}
.tab-name .icon {
  height: 9px;
}
.tab-close svg {
  width: 8px;
  height: 8px;
  fill: none;
  stroke: #777777;
}
.tab-close {
  background: #dadada;
  outline: 1px solid #a4a4a4;
  outline-offset: -1px;
}
.current .tab-close {
  background: #e4674f;
  outline-color: #c84a34;
}
.current .tab-close svg {
  stroke: #ffffff;
}

.status {
  display: flex;
  align-items: flex-end;
  height: 10px;
  flex: none;
  color: #333333;
}
.message {
  flex: 1;
}
.navigation {
  display: flex;
  align-items: center;
  gap: 2px;
  padding: 0 4px;
  border-left: 1px solid #d6d6d6;
  border-right: 1px solid #d6d6d6;
}
.navigation svg:first-child {
  width: 7px;
  height: 7px;
}
.navigation svg:last-child {
  width: 5px;
  height: 5px;
}
.dimensions {
  padding: 0 3px 0 2px;
  margin-right: 8px;
  border-right: 1px solid #d6d6d6;
}
.taskbar {
  display: flex;
  justify-content: space-between;
  height: 4px;
  flex: none;
  overflow: hidden;
  background: #1d1c1f;
  color: #e6e6e6;
}
.search {
  width: 172px;
  margin-left: 24px;
  background: #f3f3f3;
}
.clock {
  display: flex;
  gap: 10px;
  margin-right: 28px;
  line-height: 6px;
}
</style>
